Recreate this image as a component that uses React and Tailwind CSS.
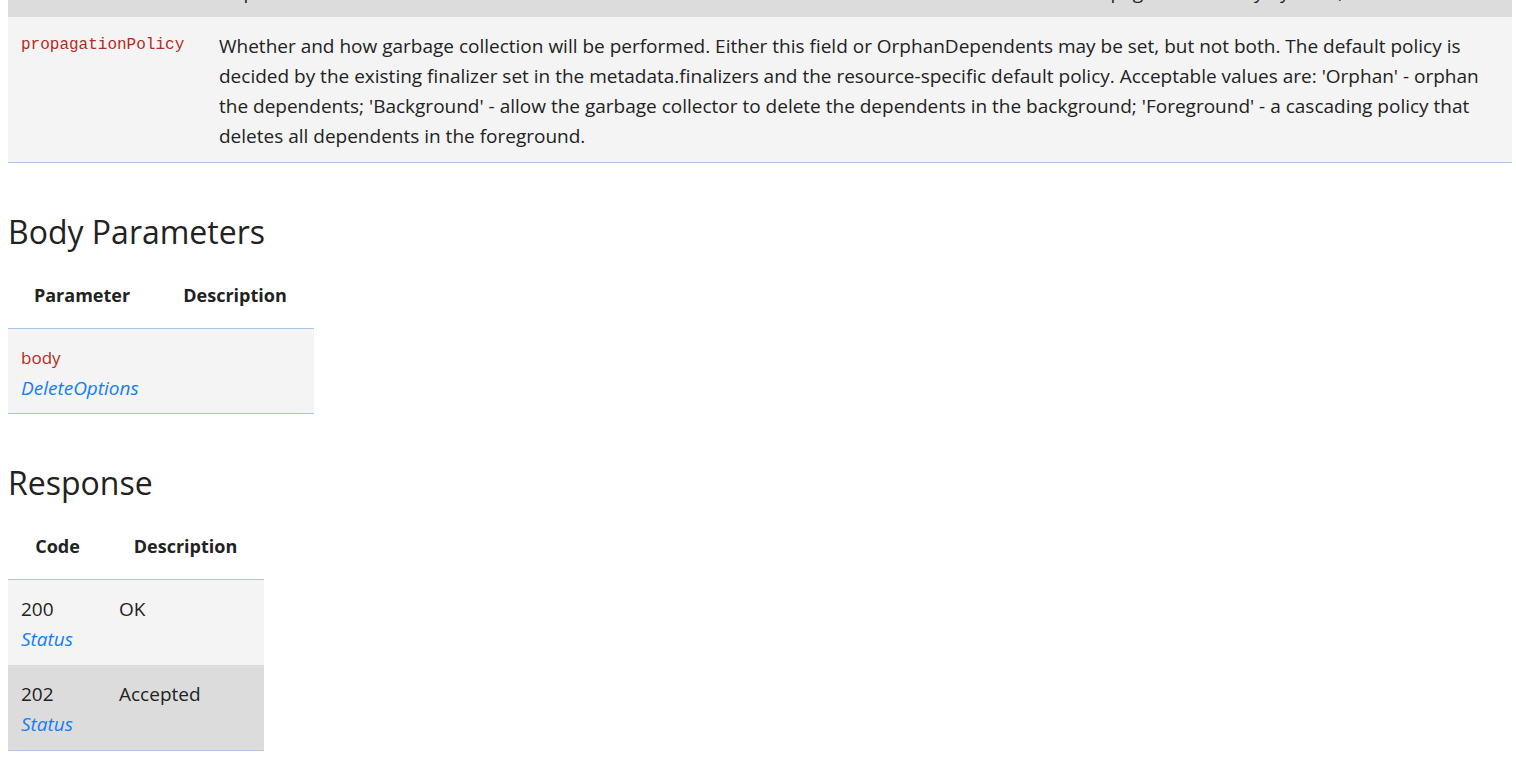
import React from "react";

const sans = "font-['Open_Sans','Noto_Sans',sans-serif]";

export default function App() {
  return (
    <div className={`${sans} bg-white text-[#222] pl-2 w-[1516px] h-[770px] overflow-hidden`}>
      <table className="w-[1504px] border-collapse table-fixed">
        <colgroup>
          <col className="w-[198px]" />
          <col />
        </colgroup>
        <tbody>
          <tr className="bg-[#dcdcdc]">
            <td className="p-0"></td>
            <td className="p-0">
              <div className="h-[17px] overflow-hidden pl-[13px]">
                <div className="text-[19px] leading-[30px] whitespace-nowrap -mt-[23px]">
                  Deprecated in the next release. It is retained here so that client libraries can still send it to the server page that the key by an id, and so on.
                </div>
              </div>
            </td>
          </tr>
          <tr className="bg-[#f4f4f4] border-b border-[#a9c5e8]">
            <td className="align-top pl-[13px] pt-[13px] pb-[12px]">
              <code className="font-['Liberation_Mono',monospace] text-[16px] leading-[30px] text-[#b42a20]">
                propagationPolicy
              </code>
            </td>
            <td className="align-top px-[13px] pt-[14px] pb-[11px] text-[19px] leading-[30px]">
              Whether and how garbage collection will be performed. Either this field or OrphanDependents may be set, but not both. The default policy is
              <br />
              decided by the existing finalizer set in the metadata.finalizers and the resource-specific default policy. Acceptable values are: 'Orphan' - orphan
              <br />
              the dependents; 'Background' - allow the garbage collector to delete the dependents in the background; 'Foreground' - a cascading policy that
              <br />
              deletes all dependents in the foreground.
            </td>
          </tr>
        </tbody>
      </table>

      <h2 className="mt-[49px] mb-[10px] text-[32px] leading-[40px] font-normal">Body Parameters</h2>
      <table className="border-collapse table-fixed w-[306px]">
        <colgroup>
          <col className="w-[148px]" />
          <col className="w-[158px]" />
        </colgroup>
        <thead>
          <tr className="border-b border-[#a9c5e8]">
            <th className="py-[18px] text-[18px] leading-[30px] font-bold text-center">Parameter</th>
            <th className="py-[18px] text-[18px] leading-[30px] font-bold text-center">Description</th>
          </tr>
        </thead>
        <tbody>
          <tr className="bg-[#f4f4f4] border-b border-[#a9c5e8]">
            <td className="align-top px-[13px] pt-[14px] pb-[10px] text-[19px] leading-[30px]">
              <div className="text-[#b42a20] text-[17px]">body</div>
              <div className="italic text-[#137ef8]">DeleteOptions</div>
            </td>
            <td className="align-top px-[13px] pt-[14px] pb-[10px] text-[19px] leading-[30px]"></td>
          </tr>
        </tbody>
      </table>

      <h2 className="mt-[49px] mb-[10px] text-[32px] leading-[40px] font-normal">Response</h2>
      <table className="border-collapse table-fixed w-[256px]">
        <colgroup>
          <col className="w-[99px]" />
          <col className="w-[157px]" />
        </colgroup>
        <thead>
          <tr className="border-b border-[#a9c5e8]">
            <th className="py-[18px] text-[18px] leading-[30px] font-bold text-center">Code</th>
            <th className="py-[18px] text-[18px] leading-[30px] font-bold text-center">Description</th>
          </tr>
        </thead>
        <tbody>
          <tr className="bg-[#f4f4f4]">
            <td className="align-top px-[13px] pt-[14px] pb-[11px] text-[19px] leading-[30px]">
              <div>200</div>
              <div className="italic text-[#137ef8]">Status</div>
            </td>
            <td className="align-top px-[12px] pt-[14px] pb-[11px] text-[19px] leading-[30px]">OK</td>
          </tr>
          <tr className="bg-[#dcdcdc] border-b border-[#a9c5e8]">
            <td className="align-top px-[13px] pt-[14px] pb-[11px] text-[19px] leading-[30px]">
              <div>202</div>
              <div className="italic text-[#137ef8]">Status</div>
            </td>
            <td className="align-top px-[12px] pt-[14px] pb-[11px] text-[19px] leading-[30px]">Accepted</td>
          </tr>
        </tbody>
      </table>
    </div>
  );
}
